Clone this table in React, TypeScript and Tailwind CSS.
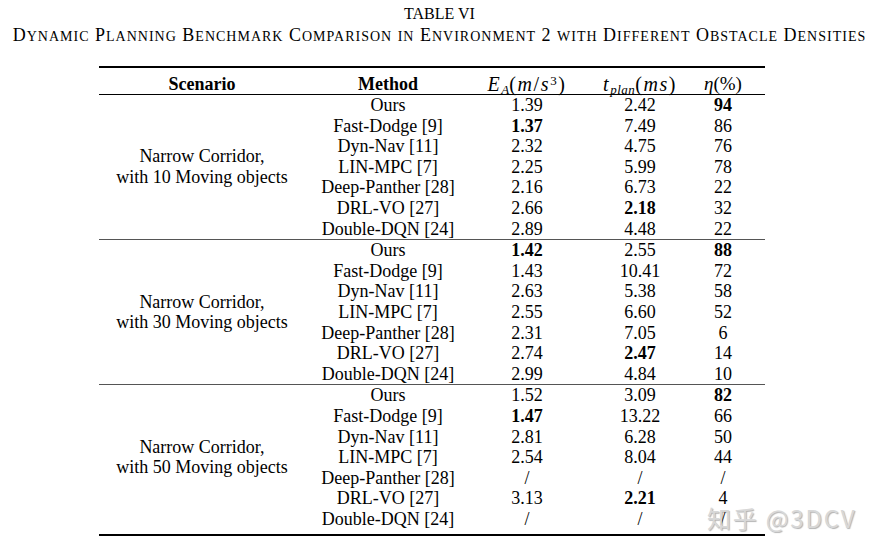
import React from "react";

type Row = { method: string; ea: string; tp: string; eta: string; bold?: ("ea" | "tp" | "eta")[] };

const groups: { scenario: string[]; rows: Row[] }[] = [
  {
    scenario: ["Narrow Corridor,", "with 10 Moving objects"],
    rows: [
      { method: "Ours", ea: "1.39", tp: "2.42", eta: "94", bold: ["eta"] },
      { method: "Fast-Dodge [9]", ea: "1.37", tp: "7.49", eta: "86", bold: ["ea"] },
      { method: "Dyn-Nav [11]", ea: "2.32", tp: "4.75", eta: "76" },
      { method: "LIN-MPC [7]", ea: "2.25", tp: "5.99", eta: "78" },
      { method: "Deep-Panther [28]", ea: "2.16", tp: "6.73", eta: "22" },
      { method: "DRL-VO [27]", ea: "2.66", tp: "2.18", eta: "32", bold: ["tp"] },
      { method: "Double-DQN [24]", ea: "2.89", tp: "4.48", eta: "22" },
    ],
  },
  {
    scenario: ["Narrow Corridor,", "with 30 Moving objects"],
    rows: [
      { method: "Ours", ea: "1.42", tp: "2.55", eta: "88", bold: ["ea", "eta"] },
      { method: "Fast-Dodge [9]", ea: "1.43", tp: "10.41", eta: "72" },
      { method: "Dyn-Nav [11]", ea: "2.63", tp: "5.38", eta: "58" },
      { method: "LIN-MPC [7]", ea: "2.55", tp: "6.60", eta: "52" },
      { method: "Deep-Panther [28]", ea: "2.31", tp: "7.05", eta: "6" },
      { method: "DRL-VO [27]", ea: "2.74", tp: "2.47", eta: "14", bold: ["tp"] },
      { method: "Double-DQN [24]", ea: "2.99", tp: "4.84", eta: "10" },
    ],
  },
  {
    scenario: ["Narrow Corridor,", "with 50 Moving objects"],
    rows: [
      { method: "Ours", ea: "1.52", tp: "3.09", eta: "82", bold: ["eta"] },
      { method: "Fast-Dodge [9]", ea: "1.47", tp: "13.22", eta: "66", bold: ["ea"] },
      { method: "Dyn-Nav [11]", ea: "2.81", tp: "6.28", eta: "50" },
      { method: "LIN-MPC [7]", ea: "2.54", tp: "8.04", eta: "44" },
      { method: "Deep-Panther [28]", ea: "/", tp: "/", eta: "/" },
      { method: "DRL-VO [27]", ea: "3.13", tp: "2.21", eta: "4", bold: ["tp"] },
      { method: "Double-DQN [24]", ea: "/", tp: "/", eta: "/" },
    ],
  },
];

const caption =
  "Dynamic Planning Benchmark Comparison in Environment 2 with Different Obstacle Densities";

// IEEE-style small caps: capitals at full size, the rest as smaller capitals
const SmallCaps = ({ text }: { text: string }) => (
  <>
    {text.split(" ").map((w, i) => {
      const big = /[A-Z0-9]/.test(w[0]);
      return (
        <React.Fragment key={i}>
          {i > 0 && " "}
          {big ? w[0] : <span className="text-[14px]">{w[0].toUpperCase()}</span>}
          <span className="text-[14px]">{w.slice(1).toUpperCase()}</span>
        </React.Fragment>
      );
    })}
  </>
);

const cell = (v: string, b: boolean) => <span className={b ? "font-bold" : ""}>{v}</span>;

const cols = "grid grid-cols-[206px_166px_112px_114px_68px]";

export default function App() {
  return (
    <div className="relative w-[879px] h-[553px] bg-white text-black font-['Liberation_Serif','Times_New_Roman',serif] overflow-hidden">
      <div className="pt-[4px] text-center text-[16px] leading-[20px]">TABLE VI</div>
      <div className="text-center text-[18px] leading-[22px] tracking-[1px] whitespace-nowrap">
        <SmallCaps text={caption} />
      </div>

      <div className="mt-[18px] ml-[99px] w-[666px] border-t-[2px] border-black">
        <div className={cols + " h-[27px] items-end text-[18px] leading-[20px] border-b border-black"}>
          <div className="text-center font-bold">Scenario</div>
          <div className="text-center font-bold">Method</div>
          <div className="text-center text-[20px] tracking-[1.6px]">
            <span className="italic">E</span>
            <sub className="text-[13px] italic tracking-normal">A</sub>(<span className="italic">m</span>/<span className="italic">s</span>
            <sup className="text-[13px]">3</sup>)
          </div>
          <div className="text-center text-[20px] tracking-[1.5px]">
            <span className="italic">t</span>
            <sub className="text-[13px] italic tracking-[0.5px]">plan</sub>(<span className="italic">ms</span>)
          </div>
          <div className="text-center pr-[16px] text-[19px]">
            <span className="italic">η</span>(%)
          </div>
        </div>

        {groups.map((g, gi) => (
          <div
            key={gi}
            className={
              cols + " text-[18px] leading-[20.6px] " + (gi < 2 ? "border-b border-[#555]" : "pb-[5px]")
            }
          >
            <div className="row-span-7 flex flex-col items-center justify-center text-center">
              {g.scenario.map((s) => (
                <div key={s}>{s}</div>
              ))}
            </div>
            {g.rows.map((r) => (
              <React.Fragment key={r.method}>
                <div className="col-start-2 text-center">{r.method}</div>
                <div className="text-center">{cell(r.ea, !!r.bold?.includes("ea"))}</div>
                <div className="text-center">{cell(r.tp, !!r.bold?.includes("tp"))}</div>
                <div className="text-center pr-[16px]">{cell(r.eta, !!r.bold?.includes("eta"))}</div>
              </React.Fragment>
            ))}
          </div>
        ))}
        <div className="border-t-[2px] border-black" />
      </div>

      <div className="absolute left-[707px] top-[502px] text-[24px] leading-[32px] tracking-[1.8px] text-[#d8d8d8] font-['Noto_Sans_CJK_SC','Noto_Sans',sans-serif] [text-shadow:1px_1px_1px_rgba(0,0,0,0.3)]">
        知乎 @3DCV
      </div>
    </div>
  );
}
